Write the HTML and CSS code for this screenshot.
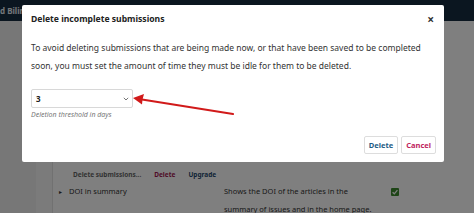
FILE: index.html
```html
<!DOCTYPE html>
<html lang="en">
<head>
    <meta charset="UTF-8">
    <title>Delete incomplete submissions</title>
    <link rel="stylesheet" href="styles.css">
</head>
<body>
    <div id="app">
        <!-- Cabecera del sitio -->
        <div id="top-bar"><span class="site-name">d Bilingual</span></div>

        <div id="workspace">
            <div id="nav-col"></div>
            <div id="gutter"></div>
            <div id="panel">
                <div class="panel-space"></div>
                <div class="plugin-actions">
                    <span class="act-muted">Delete submissions...</span>
                    <span class="act-delete">Delete</span>
                    <span class="act-upgrade">Upgrade</span>
                </div>
                <div class="plugin-row">
                    <div class="plugin-name"><span class="caret">&#9656;</span>DOI in summary</div>
                    <div class="plugin-desc">Shows the DOI of the articles in the summary of issues and in the home page.</div>
                    <div class="plugin-check">
                        <svg width="8" height="8" viewBox="0 0 8 8"><rect width="8" height="8" rx="1" fill="#3c8a2e"/><path d="M1.6 4.2 L3.3 5.8 L6.4 2.2" stroke="#fff" stroke-width="1.3" fill="none"/></svg>
                    </div>
                </div>
            </div>
        </div>
    </div>

    <!-- Capa oscura y ventana modal -->
    <div id="overlay"></div>
    <div id="modal">
        <div class="modal-header">
            <span class="modal-title">Delete incomplete submissions</span>
            <span class="modal-close">&times;</span>
        </div>
        <div class="modal-body">
            <p class="modal-text">To avoid deleting submissions that are being made now, or that have been saved to be completed soon, you must set the amount of time they must be idle for them to be deleted.</p>
            <div class="field">
                <div class="select-box">
                    <span>3</span>
                    <svg width="6" height="4" viewBox="0 0 6 4"><path d="M0.8 0.8 L3 3 L5.2 0.8" stroke="#666" stroke-width="0.9" fill="none"/></svg>
                </div>
                <div class="field-help">Deletion threshold in days</div>
            </div>
        </div>
        <div class="modal-footer">
            <button class="btn btn-primary">Delete</button>
            <button class="btn btn-cancel">Cancel</button>
        </div>
    </div>

    <!-- Flecha de anotación -->
    <svg id="arrow" width="474" height="213" viewBox="0 0 474 213">
        <path d="M233 114 L142 99.5" stroke="#d11a1a" stroke-width="2" stroke-linecap="round" fill="none"/>
        <path d="M133 98 L144 94 L142.5 99.6 L142 104.5 Z" fill="#d11a1a"/>
    </svg>
</body>
</html>
```

FILE: styles.css
```css
/* Estilos base */
body, html {
    margin: 0;
    padding: 0;
    width: 474px;
    height: 213px;
    overflow: hidden;
    font-family: "Noto Sans", Arial, sans-serif;
    background-color: #fff;
}

#app {
    width: 474px;
    height: 213px;
    display: flex;
    flex-direction: column;
}

#top-bar {
    height: 21px;
    flex-shrink: 0;
    background-color: #172c40;
    color: #e8eef4;
    display: flex;
    align-items: center;
    font-size: 8px;
    font-weight: bold;
    overflow: hidden;
}

.site-name {
    white-space: nowrap;
}

#workspace {
    flex-grow: 1;
    display: flex;
}

#nav-col {
    width: 36px;
    background-color: #eeeeee;
}

#gutter {
    width: 16px;
    background-color: #f6f6f6;
    border-right: 1px solid #e2e2e2;
}

#panel {
    flex-grow: 1;
    background-color: #fff;
    display: flex;
    flex-direction: column;
}

#panel > div {
    flex-shrink: 0;
}

.panel-space {
    height: 146px;
}

.plugin-actions {
    display: flex;
    gap: 13px;
    padding-left: 20px;
    font-size: 6.5px;
    font-weight: bold;
    height: 14px;
    align-items: center;
}

.act-muted { color: #666; }
.act-delete { color: #a0164f; }
.act-upgrade { color: #1f4a6e; }

.plugin-row {
    display: flex;
    padding-top: 1px;
    font-size: 7.5px;
    line-height: 18px;
    color: #333;
}

.plugin-name {
    width: 165px;
    padding-left: 6px;
}

.caret {
    font-size: 6px;
    margin-right: 7px;
}

.plugin-desc {
    width: 150px;
}

.plugin-check {
    padding-left: 17px;
    padding-top: 2px;
}

#overlay {
    position: absolute;
    left: 0;
    top: 0;
    width: 474px;
    height: 213px;
    background-color: rgba(0, 0, 0, 0.5);
}

#modal {
    position: absolute;
    left: 22px;
    top: 5px;
    width: 422px;
    height: 157px;
    background-color: #fff;
    border-radius: 2px;
    display: flex;
    flex-direction: column;
}

.modal-header {
    height: 28px;
    display: flex;
    justify-content: space-between;
    align-items: center;
    padding: 0 10px 0 9px;
}

.modal-title {
    font-size: 8.6px;
    font-weight: bold;
    color: #222;
}

.modal-close {
    font-size: 12px;
    font-weight: bold;
    color: #333;
}

.modal-body {
    padding: 6px 9px 0 9px;
}

.modal-text {
    margin: 0;
    font-size: 8.5px;
    line-height: 18px;
    color: #333;
}

.field {
    margin-top: 14px;
}

.select-box {
    width: 93px;
    height: 17px;
    border: 1px solid #d8d8d8;
    border-radius: 2px;
    display: flex;
    align-items: center;
    justify-content: space-between;
    padding: 0 3px 0 4px;
    font-size: 8px;
    font-weight: bold;
    color: #222;
}

.field-help {
    margin-top: 1px;
    font-size: 7px;
    font-style: italic;
    color: #777;
    line-height: 12px;
}

.modal-footer {
    margin-top: auto;
    display: flex;
    justify-content: flex-end;
    gap: 3px;
    padding: 0 8px 8px 0;
}

.btn {
    height: 18px;
    background: #fff;
    border: 1px solid #ddd;
    border-radius: 2px;
    font-family: "Noto Sans", Arial, sans-serif;
    font-size: 7.5px;
    font-weight: bold;
    padding: 0 4px;
    cursor: pointer;
}

.btn-primary { color: #1d5b84; }
.btn-cancel { color: #c0245e; }

#arrow {
    position: absolute;
    left: 0;
    top: 0;
}
```
